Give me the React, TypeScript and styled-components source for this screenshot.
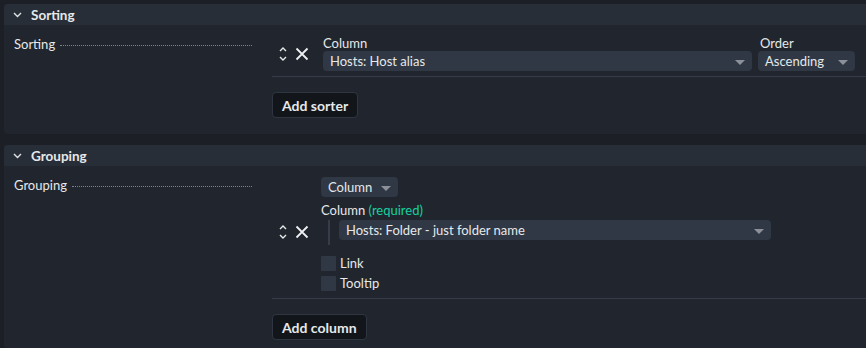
import React from 'react';
import styled, { createGlobalStyle } from 'styled-components';

const GlobalStyle = createGlobalStyle`
	html, body {
		margin: 0;
		padding: 0;
		background: #1c2026;
	}
	body {
		font-family: Lato, "Noto Sans", sans-serif;
		font-size: 13px;
		color: #e6e8ea;
	}
`;

const Page = styled.div`
	display: flex;
	flex-direction: column;
	gap: 11px;
	padding: 4px 0 0 4px;
	height: 344px;
	overflow: hidden;
`;

const Panel = styled.section<{ $grow?: boolean }>`
	background: #21262e;
	border-radius: 4px 0 0 4px;
	display: flex;
	flex-direction: column;
	flex: ${({ $grow }) => ($grow ? '1' : 'none')};
`;

const Header = styled.div`
	height: 21px;
	background: #282e38;
	border-radius: 4px 0 0 0;
	display: flex;
	align-items: center;
	padding-left: 9px;
	gap: 9px;
	font-weight: bold;
	font-size: 13.5px;
`;

const Body = styled.div<{ $h: number }>`
	display: flex;
	height: ${({ $h }) => $h}px;
	padding-top: 11px;
	box-sizing: border-box;
`;

const LabelCell = styled.div`
	width: 268px;
	padding: 0 20px 0 10px;
	box-sizing: border-box;
	display: flex;
	align-items: baseline;
	flex: none;
`;

const Label = styled.span`
	white-space: nowrap;
`;

const Dots = styled.span`
	flex: 1;
	margin-left: 5px;
	border-bottom: 1px dotted #7d838c;
	transform: translateY(-3px);
`;

const Content = styled.div`
	flex: 1;
	display: flex;
	flex-direction: column;
`;

const Entry = styled.div<{ $stack?: boolean }>`
	display: flex;
	flex-direction: ${({ $stack }) => ($stack ? 'column' : 'row')};
	align-items: ${({ $stack }) => ($stack ? 'stretch' : 'center')};
	padding-bottom: 5px;
	border-bottom: 1px solid #353c47;
`;

const Controls = styled.div`
	display: flex;
	align-items: center;
	gap: 7px;
	padding-left: 6px;
	width: 51px;
	box-sizing: border-box;
	flex: none;
`;

const Field = styled.div`
	display: flex;
	flex-direction: column;
	margin-right: 6px;
`;

const FieldLabel = styled.div<{ $indent?: number; $top?: number }>`
	line-height: 15px;
	padding-left: ${({ $indent }) => $indent ?? 0}px;
	margin-top: ${({ $top }) => $top ?? 0}px;
`;

const Required = styled.span`
	color: #15d1a0;
`;

const Select = styled.div<{ $w: number }>`
	width: ${({ $w }) => $w}px;
	height: 20px;
	background: #2f3844;
	border-radius: 4px;
	display: flex;
	align-items: center;
	justify-content: space-between;
	padding: 0 7px 0 7px;
	box-sizing: border-box;
	flex: none;
	white-space: nowrap;
`;

const Caret = styled.span`
	width: 0;
	height: 0;
	border-left: 5px solid transparent;
	border-right: 5px solid transparent;
	border-top: 5px solid #8b9099;
	margin-top: 2px;
`;

const Button = styled.button`
	align-self: flex-start;
	margin-top: 15px;
	height: 26px;
	padding: 0 9px;
	background: #12161b;
	border: 1px solid #2f3642;
	border-radius: 4px;
	color: #e6e8ea;
	font-family: inherit;
	font-weight: bold;
	font-size: 14px;
`;

const GroupBlock = styled.div`
	display: flex;
	flex-direction: column;
	padding-left: 49px;
`;

const NestedRow = styled.div`
	display: flex;
	align-items: center;
`;

const Nested = styled.div`
	display: flex;
	margin-top: 2px;
	margin-left: 5px;
	padding-left: 9px;
	border-left: 2px solid #363d48;
	height: 25px;
`;

const Checks = styled(GroupBlock)`
	margin-top: 8px;
`;

const CheckRow = styled.label`
	display: flex;
	align-items: center;
	gap: 4px;
	height: 20px;
`;

const Box = styled.span`
	width: 15px;
	height: 15px;
	background: #2f3844;
	border-radius: 1px;
`;

function Chevron() {
	return (
		<svg width="9" height="6" viewBox="0 0 9 6">
			<path d="M1 1 L4.5 4.5 L8 1" stroke="#dfe2e5" strokeWidth="1.4" fill="none" />
		</svg>
	);
}

function UpDown() {
	return (
		<svg width="10" height="18" viewBox="0 0 10 18">
			<path d="M2 6 L5 3 L8 6 M2 12 L5 15 L8 12" stroke="#e6e8ea" strokeWidth="1.4" fill="none" />
		</svg>
	);
}

function Cross() {
	return (
		<svg width="14" height="14" viewBox="0 0 14 14">
			<path d="M1.5 1.5 L12.5 12.5 M12.5 1.5 L1.5 12.5" stroke="#eef0f2" strokeWidth="1.8" fill="none" />
		</svg>
	);
}

export default function App() {
	return (
		<>
			<GlobalStyle />
			<Page>
				<Panel>
					<Header>
						<Chevron />
						Sorting
					</Header>
					<Body $h={109}>
						<LabelCell>
							<Label>Sorting</Label>
							<Dots />
						</LabelCell>
						<Content>
							<Entry>
								<Controls>
									<UpDown />
									<Cross />
								</Controls>
								<Field>
									<FieldLabel>Column</FieldLabel>
									<Select $w={429}>
										Hosts: Host alias
										<Caret />
									</Select>
								</Field>
								<Field>
									<FieldLabel $indent={2}>Order</FieldLabel>
									<Select $w={97}>
										Ascending
										<Caret />
									</Select>
								</Field>
							</Entry>
							<Button>Add sorter</Button>
						</Content>
					</Body>
				</Panel>
				<Panel $grow>
					<Header>
						<Chevron />
						Grouping
					</Header>
					<Body $h={182}>
						<LabelCell>
							<Label>Grouping</Label>
							<Dots />
						</LabelCell>
						<Content>
							<Entry $stack>
								<GroupBlock>
									<Select $w={77}>
										Column
										<Caret />
									</Select>
									<FieldLabel $top={6}>
										Column <Required>(required)</Required>
									</FieldLabel>
								</GroupBlock>
								<NestedRow>
									<Controls>
										<UpDown />
										<Cross />
									</Controls>
									<Nested>
										<Select $w={432}>
											Hosts: Folder - just folder name
											<Caret />
										</Select>
									</Nested>
								</NestedRow>
								<Checks>
									<CheckRow>
										<Box />
										Link
									</CheckRow>
									<CheckRow>
										<Box />
										Tooltip
									</CheckRow>
								</Checks>
							</Entry>
							<Button>Add column</Button>
						</Content>
					</Body>
				</Panel>
			</Page>
		</>
	);
}
